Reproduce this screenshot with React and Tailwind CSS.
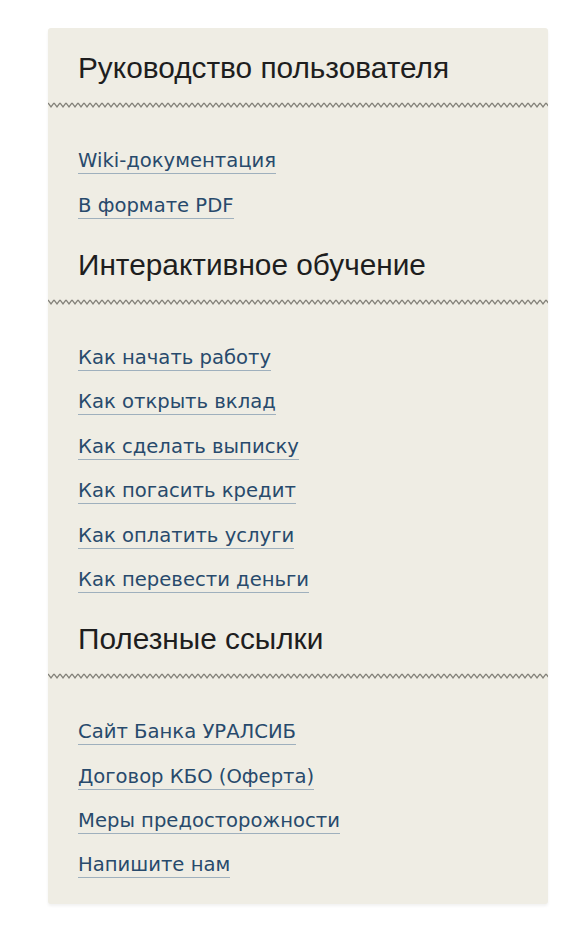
const sections = [
  {
    title: "Руководство пользователя",
    links: ["Wiki-документация", "В формате PDF"],
  },
  {
    title: "Интерактивное обучение",
    links: [
      "Как начать работу",
      "Как открыть вклад",
      "Как сделать выписку",
      "Как погасить кредит",
      "Как оплатить услуги",
      "Как перевести деньги",
    ],
  },
  {
    title: "Полезные ссылки",
    links: [
      "Сайт Банка УРАЛСИБ",
      "Договор КБО (Оферта)",
      "Меры предосторожности",
      "Напишите нам",
    ],
  },
];

const Zigzag = () => (
  <svg className="block w-full h-[8px]" xmlns="http://www.w3.org/2000/svg">
    <defs>
      <pattern id="zz" width="6" height="8" patternUnits="userSpaceOnUse">
        <polyline
          points="0,2 3,6 6,2"
          fill="none"
          stroke="#84827a"
          strokeWidth="1.3"
        />
      </pattern>
    </defs>
    <rect width="100%" height="8" fill="url(#zz)" />
  </svg>
);

export default function App() {
  return (
    <div className="min-h-screen bg-white pt-[28px] pl-[48px]">
      <div className="w-[500px] bg-[#efede4] rounded-[3px] shadow-[0_2px_3px_rgba(0,0,0,0.06)] pt-[20px] pb-[17px]">
        {sections.map((s, i) => (
          <div key={s.title} className={i > 0 ? "mt-[18px]" : ""}>
            <h2 className="px-[30px] h-[40px] leading-[40px] text-[29.8px] text-[#1e1e1e] font-['Liberation_Sans',Arial,sans-serif]">
              {s.title}
            </h2>
            <div className="mt-[13px]">
              <Zigzag />
            </div>
            <div className="mt-[29px] px-[30px]">
              {s.links.map((l) => (
                <div key={l} className="h-[44.4px] flex items-center">
                  <a
                    href="#"
                    className="inline-block leading-[24px] pt-[3px] text-[19.6px] text-[#284a6c] border-b border-[#9fb0bd] font-['DejaVu_Sans',Verdana,sans-serif]"
                  >
                    {l}
                  </a>
                </div>
              ))}
            </div>
          </div>
        ))}
      </div>
    </div>
  );
}
